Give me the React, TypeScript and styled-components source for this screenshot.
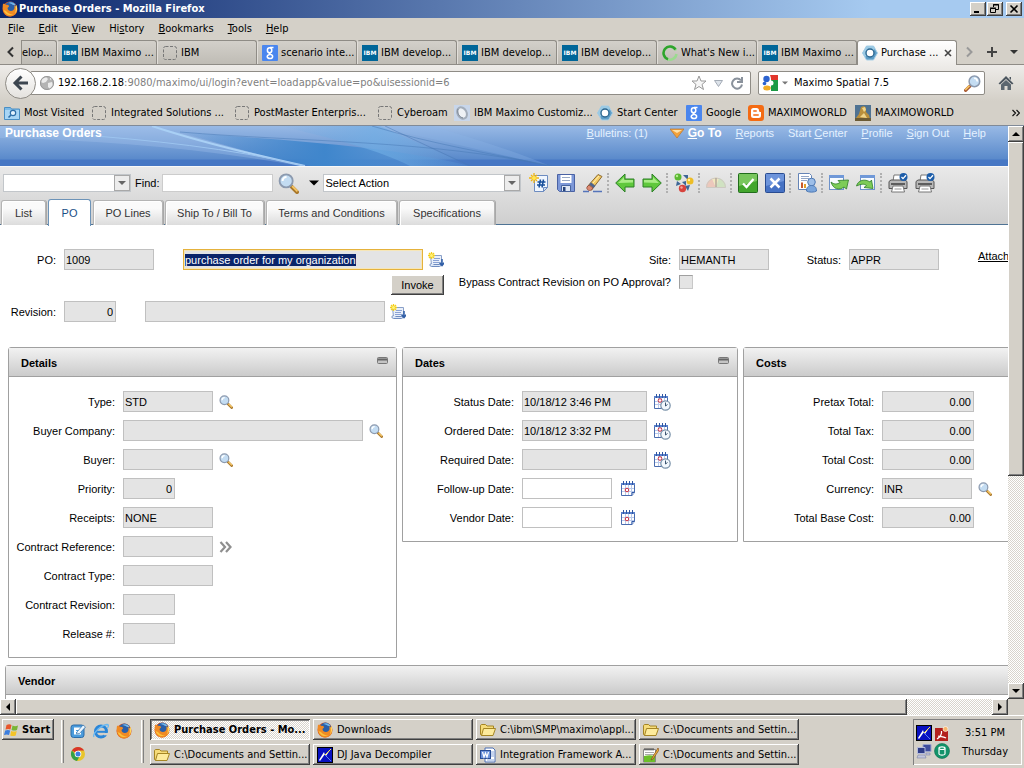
import React, { useEffect, useId, useRef } from "react";
import styled, { createGlobalStyle, css } from "styled-components";

const Global = createGlobalStyle`
  * { box-sizing: border-box; }
  html, body, #root { height: 100%; }
  body { margin: 0; overflow: hidden; background: #d4d0c8; color: #000; font: 11px/14px "DejaVu Sans Condensed", "DejaVu Sans", sans-serif; }
  button, input, select { font: inherit; color: inherit; margin: 0; padding: 0; border: 0; border-radius: 0; background: none; }
  a { color: inherit; }
  svg { display: block; flex: none; }
`;

const raised = css`
  background: #d4d0c8;
  box-shadow: inset -1px -1px #404040, inset 1px 1px #fff, inset -2px -2px #808080;
`;
const dither = css`
  background: repeating-conic-gradient(#fff 0 25%, #d8d4cc 0 50%) 0 0 / 2px 2px;
`;

const Screen = styled.div`
  display: flex;
  flex-direction: column;
  height: 100vh;
  overflow: hidden;
`;

/* ---------- window frame ---------- */
const TitleBar = styled.header`
  display: flex;
  align-items: center;
  height: 18px;
  padding: 0 2px;
  gap: 1px;
  background: linear-gradient(90deg, #0a246a, #a6caf0 85%);
  color: #fff;
  font-weight: bold;
`;
const WindowTitle = styled.span`
  flex: 1;
  white-space: nowrap;
`;
const WindowButton = styled.button<{ $apart?: boolean }>`
  ${raised}
  display: grid;
  place-items: center;
  width: 16px;
  height: 14px;
  margin-left: ${(p) => (p.$apart ? 2 : 0)}px;
`;
const MenuBar = styled.nav`
  display: flex;
  align-items: center;
  height: 22px;
  padding: 0 8px;
  gap: 14px;
`;
const MenuItem = styled.button`
  white-space: nowrap;
`;

const TabStrip = styled.div`
  display: flex;
  height: 25px;
  border-bottom: 1px solid #8f8c86;
`;
const StripButton = styled.button<{ $w: number }>`
  display: grid;
  place-items: center;
  width: ${(p) => p.$w}px;
  flex: none;
`;
const BrowserTab = styled.button<{ $active?: boolean; $w?: number }>`
  display: flex;
  align-items: center;
  gap: 3px;
  flex: 0 0 ${(p) => p.$w ?? 100}px;
  height: ${(p) => (p.$active ? 25 : 24)}px;
  padding: 0 4px;
  overflow: hidden;
  white-space: nowrap;
  border: 1px solid #8f8c86;
  border-bottom: 0;
  border-radius: 3px 3px 0 0;
  border-left-color: ${(p) => (p.$active ? "#8f8c86" : "#e2dfda")};
  background: ${(p) => (p.$active ? "linear-gradient(#fff, #eeece9)" : "linear-gradient(#d3d0ca, #bfbcb5)")};
  ${(p) => p.$w && "padding: 0; border-left: 1px solid #8f8c86; border-radius: 0 3px 0 0;"}
`;
const TabText = styled.span`
  flex: 1;
  text-align: left;
`;

const NavBar = styled.div`
  display: flex;
  align-items: center;
  height: 36px;
  padding: 0 10px 0 5px;
  background: linear-gradient(#eeece9, #d4d0c8);
`;
const BackButton = styled.button`
  display: grid;
  place-items: center;
  width: 31px;
  height: 31px;
  border: 1px solid #8f8c86;
  border-radius: 50%;
  background: linear-gradient(#fff, #e4e2de);
  z-index: 1;
`;
const UrlBox = styled.div`
  display: flex;
  align-items: center;
  flex: 1;
  height: 24px;
  margin-left: -6px;
  padding: 0 6px 0 8px;
  border: 1px solid #8f8c86;
  border-radius: 2px;
  background: #fff;
`;
const UrlHost = styled.label`
  margin-left: 3px;
`;
const UrlInput = styled.input`
  flex: 1;
  min-width: 0;
  outline: none;
  color: #808080;
`;
const UrlTools = styled.div`
  display: flex;
  align-items: center;
  gap: 7px;
`;
const SearchBox = styled(UrlBox)`
  flex: 0 0 227px;
  margin: 0 13px 0 7px;
  padding: 0 3px;
  gap: 4px;
`;
const SearchInput = styled.input`
  flex: 1;
  min-width: 0;
  outline: none;
  padding-left: 2px;
`;
const Bookmarks = styled.nav`
  display: flex;
  height: 25px;
  padding-left: 4px;
  border-bottom: 1px solid #808a98;
`;
const Bookmark = styled.a<{ $w: number }>`
  display: flex;
  align-items: center;
  flex: 0 0 ${(p) => p.$w}px;
  gap: 4px;
  text-decoration: none;
  white-space: nowrap;
`;
const MoreBookmarks = styled.button`
  margin-left: auto;
  padding-right: 4px;
`;

/* ---------- page viewport and scroll bars ---------- */
const Viewport = styled.div`
  display: grid;
  grid-template: minmax(0, 1fr) 16px / minmax(0, 1fr) 16px;
  flex: 1;
  min-height: 0;
`;
const Page = styled.main`
  overflow: hidden;
  background: #fff;
  font: 11px/14px "Liberation Sans", Arial, sans-serif;
`;
const ScrollTrack = styled.div<{ $vertical?: boolean }>`
  ${dither}
  display: flex;
  flex-direction: ${(p) => (p.$vertical ? "column" : "row")};
  min-height: 0;
`;
const ScrollArrow = styled.button`
  ${raised}
  display: grid;
  place-items: center;
  flex: 0 0 16px;
  height: 16px;
`;
const ScrollThumb = styled.div<{ $part: number }>`
  ${raised}
  flex: ${(p) => p.$part} 1 0;
`;
const ScrollRest = styled.div<{ $part: number }>`
  flex: ${(p) => p.$part} 1 0;
`;

/* ---------- application header ---------- */
const AppHeader = styled.header`
  position: relative;
  display: flex;
  justify-content: space-between;
  height: 40px;
  padding: 0 22px 0 5px;
  background: linear-gradient(#98b9e5, #5a8acb 33px, #4677c4 34px);
  color: #fff;
`;
const HeaderArt = styled.svg`
  position: absolute;
  inset: 0 auto auto 0;
`;
const AppTitle = styled.h1`
  position: relative;
  margin: 0;
  font-size: 12px;
  line-height: 14px;
`;
const HeaderLinks = styled.nav`
  position: relative;
  display: flex;
  gap: 14px;
  color: #e4f1ff;
`;
const HeaderLink = styled.a<{ $strong?: boolean }>`
  display: flex;
  align-items: center;
  height: 14px;
  gap: 4px;
  text-decoration: none;
  white-space: pre;
  font-weight: ${(p) => (p.$strong ? "bold" : "normal")};
  font-size: ${(p) => (p.$strong ? 12 : 11)}px;
  margin-left: ${(p) => (p.$strong ? 8 : 0)}px;
  color: ${(p) => (p.$strong ? "#fff" : "inherit")};
`;
const Wide = styled.div`
  width: 110%;
`;
const ToolArea = styled.div`
  height: 59px;
  border-top: 1px solid #f8f8f8;
  border-bottom: 1px solid #4f7394;
  background: linear-gradient(#e9e9e9, #cfcfcf);
`;
const ToolRow = styled.div`
  display: flex;
  align-items: center;
  height: 32px;
  padding-left: 3px;
`;
const Combo = styled.div<{ $w: number }>`
  display: flex;
  width: ${(p) => p.$w}px;
  height: 18px;
  border: 1px solid #c2c6ca;
  background: #fff;
`;
const ComboSelect = styled.select`
  flex: 1;
  min-width: 0;
  appearance: none;
  outline: none;
  padding-left: 1px;
`;
const ComboArrow = styled.span`
  display: grid;
  place-items: center;
  width: 16px;
  border: 1px solid #a8a8a8;
  background: #ececec;
`;
const FindLabel = styled.label`
  margin: 0 3px 0 4px;
`;
const FindInput = styled.input`
  width: 111px;
  height: 18px;
  border: 1px solid #ccc;
  background: #fff;
  outline: none;
`;
const FindButton = styled.button`
  margin: 0 10px 0 5px;
`;
const ActionLabel = styled.span`
  margin-right: 4px;
`;
const ToolGroups = styled.div`
  display: flex;
  margin-left: 2px;
`;
const ToolGroup = styled.div`
  display: flex;
  gap: 7px;
  padding: 0 4px 0 6px;
  border-right: 2px dotted #b0b0b0;
  &:last-child { border: 0; }
`;
const Tool = styled.button`
  width: 20px;
  height: 20px;
`;
const AppTabs = styled.div`
  display: flex;
  align-items: flex-end;
  gap: 2px;
  height: 26px;
  padding-left: 1px;
`;
const AppTab = styled.button<{ $w: number; $active?: boolean }>`
  width: ${(p) => p.$w}px;
  height: ${(p) => (p.$active ? 27 : 25)}px;
  margin-bottom: ${(p) => (p.$active ? -1 : 0)}px;
  border: 1px solid ${(p) => (p.$active ? "#6c93b8" : "#b4b4b4")};
  border-bottom: 0;
  border-radius: 3px 3px 0 0;
  background: ${(p) => (p.$active ? "#fff" : "linear-gradient(#fafafa 30%, #dcdcdc)")};
  box-shadow: ${(p) => (p.$active ? "none" : "inset 1px 1px #fff, 1px 0 #a8a8a8")};
  color: ${(p) => (p.$active ? "#1a4f86" : "#333")};
  white-space: nowrap;
`;

/* ---------- form ---------- */
const RecordForm = styled.form`
  padding-top: 24px;
`;
const TopRow = styled.div<{ $indent?: number }>`
  display: flex;
  align-items: ${(p) => (p.$indent ? "flex-start" : "center")};
  height: 21px;
  margin-bottom: 5px;
  padding-left: ${(p) => p.$indent ?? 0}px;
`;
const FieldRow = styled.div`
  display: flex;
  align-items: center;
  height: 21px;
  margin-bottom: 8px;
`;
const FieldLabel = styled.label<{ $w: number }>`
  flex: none;
  width: ${(p) => p.$w}px;
  margin-right: 8px;
  text-align: right;
  white-space: nowrap;
`;
const FieldInput = styled.input<{ $w: number; $right?: boolean; $open?: boolean; $gap?: boolean }>`
  flex: none;
  width: ${(p) => p.$w}px;
  height: 21px;
  margin-left: ${(p) => (p.$gap ? 29 : 0)}px;
  padding: 0 2px 0 1px;
  border: 1px solid #c0c0c0;
  background: ${(p) => (p.$open ? "#fff" : "#e4e4e4")};
  text-align: ${(p) => (p.$right ? "right" : "left")};
  outline: none;
  &:focus { border: 1px solid #e5b23c; box-shadow: inset 0 0 0 1px #f6e6b8; }
  &::selection { background: #0a246a; color: #fff; }
`;
const IconButton = styled.button<{ $gap: number }>`
  margin-left: ${(p) => p.$gap}px;
`;
const InvokeButton = styled.button`
  ${raised}
  width: 53px;
  height: 20px;
`;
const CheckBox = styled.input`
  appearance: none;
  width: 14px;
  height: 14px;
  border: 1px solid #a0a0a0;
  border-right-color: #c8c8c8;
  border-bottom-color: #c8c8c8;
  background: #e4e4e4;
`;
const AttachLink = styled.a`
  align-self: flex-start;
  margin-left: 39px;
  white-space: nowrap;
`;
const Sections = styled.div`
  display: flex;
  align-items: flex-start;
  gap: 5px;
  padding: 20px 0 0 8px;
`;
const Section = styled.section<{ $w?: number }>`
  flex: ${(p) => (p.$w ? `0 0 ${p.$w}px` : "1")};
  border: 1px solid #a0a0a0;
  border-radius: 3px 3px 0 0;
`;
const SectionHead = styled.div`
  display: flex;
  align-items: flex-start;
  justify-content: space-between;
  height: 29px;
  padding: 8px 8px 0 12px;
  border-bottom: 1px solid #a0a0a0;
  background: linear-gradient(#f2f2f2, #cbcbcb);
`;
const SectionTitle = styled.h2`
  margin: 0;
  font-size: 11px;
  line-height: 14px;
`;
const SectionBody = styled.div`
  padding: 14px 0 5px;
`;
const VendorWrap = styled.div`
  display: flex;
  padding: 7px 0 0 5px;
`;

/* ---------- task bar ---------- */
const TaskBar = styled.footer`
  display: flex;
  height: 53px;
  padding: 3px 2px;
  border-top: 1px solid #fff;
`;
const StartButton = styled.button`
  ${raised}
  display: flex;
  align-items: center;
  gap: 2px;
  width: 52px;
  height: 21px;
  padding-left: 2px;
  font-weight: bold;
`;
const Divider = styled.div<{ $left: number }>`
  width: 3px;
  height: 43px;
  margin: 1px 6px 0 ${(p) => p.$left}px;
  border-left: 1px solid #fff;
  border-right: 1px solid #808080;
`;
const QuickLaunch = styled.div`
  display: grid;
  grid-template-columns: repeat(3, 23px);
  grid-auto-rows: 23px;
  align-items: center;
  width: 67px;
`;
const Tasks = styled.div`
  display: grid;
  grid-template-columns: repeat(4, 160px);
  grid-auto-rows: 21px;
  gap: 4px 3px;
  flex: 1;
`;
const Task = styled.button<{ $active?: boolean }>`
  ${raised}
  display: flex;
  align-items: center;
  gap: 4px;
  padding-left: 4px;
  overflow: hidden;
  white-space: nowrap;
  ${(p) =>
    p.$active &&
    css`
      ${dither}
      font-weight: bold;
      box-shadow: inset 1px 1px #404040, inset -1px -1px #fff, inset 2px 2px #808080;
    `}
`;
const Tray = styled.div`
  display: flex;
  align-items: center;
  gap: 12px;
  width: 109px;
  padding: 0 3px;
  box-shadow: inset 1px 1px #808080, inset -1px -1px #fff;
`;
const TrayIcons = styled.div`
  display: grid;
  grid-template-columns: 16px 16px;
  gap: 2px;
`;
const Clock = styled.div`
  line-height: 19px;
  text-align: center;
  white-space: pre;
`;

/* ---------- icons ---------- */
type IconProps = { s?: number; children?: React.ReactNode };
const Svg = ({ s = 16, box = 16, children }: IconProps & { box?: number }) => (
  <svg width={s} height={s} viewBox={`0 0 ${box} ${box}`} aria-hidden="true">
    {children}
  </svg>
);
const Triangle = ({ dir = "down", w = 8, fill = "#000" }: { dir?: string; w?: number; fill?: string }) => {
  const turn: Record<string, number> = { down: 0, left: 90, up: 180, right: 270 };
  return (
    <svg width={w} height={w} viewBox="0 0 8 8" aria-hidden="true">
      <path d="M0 2h8L4 6z" fill={fill} transform={`rotate(${turn[dir]} 4 4)`} />
    </svg>
  );
};
const Firefox = () => (
  <Svg>
    <circle cx="8" cy="8" r="7.5" fill="#d9541e" />
    <circle cx="8.500" cy="6.200" r="5.600" fill="#2a5fa8" />
    <path d="M6 2c3-1.500 6-.5 7.500 2l-2.500 0c-1-1-3-2-5-2z" fill="#73b6e8" />
    <path d="M1 3c1-.5 2 0 3 1 2-.5 3 .5 3 1.500L5.500 7c0 3 4 4 6 2 1.500-1.500 1-4 .5-5 3 2 4 6 1.500 9-3 3.500-9 3-11-.5C.5 9.500.5 5.500 1 3z" fill="#f08a24" />
    <path d="M1.500 9c1 4 6 6.500 10 4-3 .5-6-.5-7.500-3z" fill="#fbc23c" />
    <path d="M14.500 4c1 3 1 6-1.500 8.500 1-3 1-5 .5-7z" fill="#ffd95c" />
  </Svg>
);
const Ibm = () => (
  <Svg>
    <rect width="16" height="16" fill="#069" />
    <text x="8" y="10" textAnchor="middle" fill="#fff" fontSize="6" fontWeight="bold" fontFamily="DejaVu Sans">IBM</text>
  </Svg>
);
const Blank = () => (
  <Svg>
    <rect x="1.500" y="1.500" width="13" height="13" rx="2" fill="none" stroke="#777" strokeDasharray="3 1.500" />
  </Svg>
);
const GoogleG = () => (
  <Svg>
    <rect width="16" height="16" rx="1" fill="#4a86ee" />
    <g fill="none" stroke="#fff" strokeWidth="1.500">
      <ellipse cx="7.600" cy="5.200" rx="2.200" ry="2.500" />
      <path d="M8 2.500h3.500M8.500 7.500c-2 .6-1.500 1.500.2 2 2.800.8 2.500 4-.7 4s-4-3.400-.5-3.800" />
    </g>
  </Svg>
);
const Spinner = () => (
  <Svg>
    <path d="M14 5.500A6.500 6.500 0 1 0 14.500 9" fill="none" stroke="#9adb8f" strokeWidth="2.500" />
    <path d="M13.500 4.500A6.500 6.500 0 1 0 6 14.200" fill="none" stroke="#2ea32c" strokeWidth="2.500" />
  </Svg>
);
const Hexagon = () => (
  <Svg>
    <path d="M4.500 1h7L15.500 8l-4 7h-7L.5 8z" fill="#5d9dc6" stroke="#a9cfe6" />
    <path d="M4.500 1h7L13 4 3 12 .5 8z" fill="#9ccae4" />
    <circle cx="8" cy="8" r="4" fill="#fff" stroke="#2c6791" strokeWidth="1.400" />
  </Svg>
);
const Globe = () => (
  <Svg>
    <circle cx="8" cy="8" r="7" fill="#b4b4b4" />
    <path d="M3 4l4-2 2 2-2 3-3 1-2-1zM9 8l4-1 1 3-3 4-2-2zM11 2l2 2-2 1z" fill="#ececec" />
    <circle cx="8" cy="8" r="6.500" fill="none" stroke="#989898" />
  </Svg>
);
const MostVisited = () => (
  <Svg>
    <path d="M0.500 2.500h6l1 1.500h8v10.500h-15z" fill="#7dbbe8" stroke="#4a8fc4" />
    <path d="M1 5h14v9H1z" fill="#a8d6f6" />
    <circle cx="9" cy="8" r="2.700" fill="#e5f4ff" stroke="#2d6ea8" strokeWidth="1.200" />
    <path d="M7 10L4.500 12.500" stroke="#2d6ea8" strokeWidth="1.600" />
  </Svg>
);
const Ring = () => (
  <Svg>
    <rect width="16" height="16" fill="#c8d6ea" />
    <ellipse cx="8" cy="8" rx="4.500" ry="6" fill="#eef1f5" stroke="#a3adba" strokeWidth="2" transform="rotate(-30 8 8)" />
    <path d="M4 4c-1 4 1 8 5 9" fill="none" stroke="#7b8796" />
  </Svg>
);
const Blogger = () => (
  <Svg>
    <rect width="16" height="16" rx="3" fill="#f46b13" />
    <path d="M5.500 3h3a2.500 2.500 0 0 1 2.500 2.500c0 1 .5 1.500 2 1.500v3.500A2.500 2.500 0 0 1 10.500 13h-5A2.500 2.500 0 0 1 3 10.500v-5A2.500 2.500 0 0 1 5.500 3z" fill="#fff" />
    <path d="M5.800 6h2.400M5.800 10h4.400" stroke="#f46b13" strokeWidth="1.500" strokeLinecap="round" />
  </Svg>
);
const Photo = () => (
  <Svg>
    <rect width="16" height="16" fill="#4f7292" />
    <path d="M1 13l3-4 2-7 3-1 2 2v4l3 3 1 4z" fill="#b98f3c" />
    <path d="M7 3l3-1 1 3-2 2zM5 12l4-4 3 5z" fill="#efd58c" />
    <path d="M0 13h16v3H0z" fill="#6b5a34" />
  </Svg>
);
const GoogleLogo = () => (
  <Svg>
    <path d="M8 0h8v5H9z" fill="#e2352b" />
    <path d="M9 5h7v11H9z" fill="#1c9a45" />
    <path d="M0 0h8l1 5v11H0z" fill="#fff" />
    <circle cx="4.500" cy="4" r="3.200" fill="#2b62cf" />
    <circle cx="2.500" cy="8.500" r="1.800" fill="#2b62cf" />
    <circle cx="9" cy="8" r="2.500" fill="#fff" />
    <ellipse cx="5" cy="13" rx="3.800" ry="2.500" fill="#f2ac24" />
  </Svg>
);
const Lens = ({ s = 14, flip = false }: { s?: number; flip?: boolean }) => (
  <Svg s={s}>
    <g transform={flip ? "matrix(-1 0 0 1 16 0)" : undefined}>
      <path d="M10.500 10.500l4 4" stroke={flip ? "#a85a34" : "#a9782c"} strokeWidth="3" strokeLinecap="round" />
      <path d="M10.800 10l4 4" stroke="#f7c765" strokeWidth="1.400" />
      <circle cx="6.200" cy="6" r="5" fill="#c3dcf2" stroke="#8c9aaf" strokeWidth="1.400" />
      <path d="M3.500 6a3 3 0 0 1 3-3" stroke="#fff" strokeWidth="1.500" fill="none" />
    </g>
  </Svg>
);
const Folder = () => (
  <Svg>
    <path d="M.5 4c0-1 .5-1.500 1.500-1.500h3.500L7 4h6.500v3H4L2 13.500l-1.500-1z" fill="#f6dc7a" stroke="#a58524" />
    <path d="M3.500 6.500h12L13 13.500H1.500z" fill="#fdeb9c" stroke="#a58524" />
  </Svg>
);
const Decompiler = () => (
  <Svg>
    <rect width="16" height="16" fill="#000" />
    <rect x="1" y="1" width="14" height="14" fill="#0810c0" />
    <path d="M2 13l5-8 1 3 5-5-4 6-1-2-5 7z" fill="#fff" />
    <path d="M8 8l6 6" stroke="#5a7cf0" />
    <path d="M8 8l6-6" stroke="#ffe94a" />
  </Svg>
);
const Word = () => (
  <Svg>
    <path d="M5 1h8l2 2v12H5z" fill="#fff" stroke="#4a6fb4" />
    <path d="M11 5h3M11 7h3M11 9h3M7 13h7" stroke="#8ca8dc" />
    <rect x=".5" y="3.500" width="10" height="8" fill="#6d93da" stroke="#284c94" />
    <path d="M2.500 5l1.500 5 1.500-4L7 10l1.500-5" stroke="#fff" fill="none" strokeWidth="1.200" />
  </Svg>
);
const Notepad = () => (
  <Svg>
    <path d="M.5 2.500h12v12.500h-12z" fill="#fff" stroke="#888" />
    <path d="M1 9c4-1 7-1 11 0v6H1z" fill="#6cbf2a" />
    <path d="M2 5.500h9M2 7.500h9" stroke="#aaa" />
    <path d="M2 1v2.500M4 1v2.500M6 1v2.500M8 1v2.500M10 1v2.500" stroke="#444" />
    <path d="M15 1L9 11l-1 2 2-1 6-9z" fill="#f3b53a" stroke="#7e4b1c" strokeWidth=".7" />
  </Svg>
);
const Desktop = () => (
  <Svg>
    <rect x="1" y="2" width="13" height="12.500" rx="2.500" fill="#4b9bdc" stroke="#2c6ca8" />
    <path d="M4 4.500h7v7H4z" fill="#fff" />
    <path d="M6 7.500h4M6 9.500h3" stroke="#4b9bdc" />
    <path d="M7 9l6-7 2.500 2-6 6.500-3 .5z" fill="#e9f5ff" stroke="#2c6ca8" strokeWidth=".7" />
  </Svg>
);
const Explorer = () => (
  <Svg>
    <circle cx="8" cy="8.500" r="5.500" fill="none" stroke="#2b86d8" strokeWidth="3" />
    <path d="M4 8.800h9.500" stroke="#2b86d8" strokeWidth="2" />
    <path d="M10 10h6v2.300h-5z" fill="#d4d0c8" />
    <path d="M1 14C-1 11 8 2 14 1.500c2 0 1.500 2 .5 3.500" fill="none" stroke="#69b8f2" strokeWidth="1.300" />
  </Svg>
);
const Chrome = () => (
  <Svg>
    <circle cx="8" cy="8" r="7" fill="#e8c52c" />
    <path d="M8 8L1.900 4.500A7 7 0 0 1 14.100 4.500H8z" fill="#d8352a" />
    <path d="M1.900 4.500A7 7 0 0 0 7 15l3-5.500-3 1z" fill="#35a047" />
    <circle cx="8" cy="8" r="3.300" fill="#fff" />
    <circle cx="8" cy="8" r="2.500" fill="#3f7fe0" />
  </Svg>
);
const WindowsFlag = () => (
  <Svg>
    <path d="M2.500 3C4.500 2 6 2 7.500 3L6.500 7.500C5 6.700 3.500 6.700 1.500 7.500z" fill="#e8562a" />
    <path d="M8.500 3.500c2 1 3.500.8 5.500 0L13 8c-2 .8-3.500.8-5.500 0z" fill="#79b534" />
    <path d="M1.200 8.500c2-.8 3.500-.8 5 0L5 13c-1.500-.8-3-.8-5 0z" fill="#3c7ede" />
    <path d="M7.200 9c2 .8 3.500.8 5.500 0l-1 4.500c-2 .8-3.500.8-5.500 0z" fill="#f4c428" />
  </Svg>
);
const Pdf = () => (
  <Svg>
    <path d="M1 3h10l3 3v10H1z" fill="#b3201c" />
    <path d="M3 14c3-2 5-5 4.500-8M4 11c3 .5 6 .5 8 2" stroke="#fff" fill="none" strokeWidth="1.200" />
    <circle cx="11.500" cy="4" r="2.500" fill="#f7b66d" stroke="#fff" strokeWidth=".6" />
  </Svg>
);
const Network = () => (
  <Svg>
    <path d="M7 1.500h8v7H7z" fill="#3f4e9e" stroke="#9aa3cc" />
    <path d="M1.500 4.500h7.500v6H1.500z" fill="#2e3c88" stroke="#b4bbdc" />
    <path d="M2 12h7l1 3H1zM10 10h4v2h-4z" fill="#c3c7dc" stroke="#7c84a8" strokeWidth=".6" />
  </Svg>
);
const Database = () => (
  <Svg>
    <circle cx="8" cy="8" r="7.500" fill="#12936a" stroke="#0b6e4e" strokeWidth=".6" />
    <path d="M5 5.500v5.500c1 1.500 5 1.500 6 0V5.500" fill="none" stroke="#fff" strokeWidth="1.200" />
    <ellipse cx="8" cy="5.200" rx="3" ry="1.300" fill="#12936a" stroke="#fff" strokeWidth="1.200" />
  </Svg>
);
const Note = () => (
  <Svg>
    <path d="M2.500 3.500h11v8l-1.500 1.500h-8.500z" fill="#eaf0fa" stroke="#8aa0c8" />
    <path d="M3.500 11.500c-2 0-2 3 0 3h8c1.500 0 1.500-2 0-2h-6" fill="#dce6f6" stroke="#6f8cc0" />
    <path d="M6 6.500h6M5 8.500h6M5 10.500h6" stroke="#8aa2d4" />
    <path d="M14 7v6M11.500 10.500l2.500 3 2.500-3" stroke="#2f5da6" fill="none" strokeWidth="1.500" />
    <path d="M3.500 0v7M0 3.500h7M1 1l5 5M6 1L1 6" stroke="#f4cf1c" strokeWidth="1.300" />
    <circle cx="3.500" cy="3.500" r="1.500" fill="#fff27a" />
  </Svg>
);
const Calendar = ({ clock = false }: { clock?: boolean }) => (
  <svg width={clock ? 18 : 16} height="18" viewBox={`0 0 ${clock ? 18 : 16} 18`} aria-hidden="true">
    <path d="M1.500 3.500h13v9l-2.500 3H1.500z" fill="#fff" stroke="#4a6cae" />
    <path d="M1 3h14v2H1z" fill="#5b82cc" />
    <path d="M2 8.500h12M2 11.500h12M5.500 5v10M8.500 5v10M11.500 5v10" stroke="#b9c9ea" />
    <path d="M3.500 1v4M6.500 1v4M9.500 1v4M12.500 1v4" stroke="#2f56a4" />
    <circle cx="7" cy={clock ? 7.5 : 10} r="1.800" fill="#fff" stroke="#c8283c" />
    {!clock && <path d="M12 15.500v-3h2.500" fill="#dbe6f7" stroke="#2f56a4" />}
    {clock && (
      <>
        <circle cx="12.500" cy="12.500" r="4.700" fill="#f3f8fd" stroke="#7890a8" strokeWidth="1.200" />
        <path d="M12.500 9.500v3.500l2-1.500" stroke="#3c5570" fill="none" />
      </>
    )}
  </svg>
);
const Chevrons = () => (
  <svg width="14" height="12" viewBox="0 0 14 12" aria-hidden="true">
    <path d="M1.500 1l4.500 5-4.500 5M7 1l4.500 5L7 11" fill="none" stroke="#8f8f8f" strokeWidth="2.200" />
  </svg>
);
const Minimize = () => (
  <svg width="11" height="9" viewBox="0 0 11 9" aria-hidden="true">
    <rect x=".5" y="1.500" width="10" height="6" rx="1" fill="#c4c4c4" stroke="#777" />
    <path d="M1 3.500h9" stroke="#666" strokeWidth="2" />
  </svg>
);

const T = ({ children }: IconProps) => <Svg s={20} box={20}>{children}</Svg>;
const NewRecord = () => (
  <T>
    <path d="M5.500 2.500h13v12l-4 4h-9z" fill="#f0f6fe" stroke="#6d8cc0" />
    <path d="M14.500 18.500v-4h4z" fill="#cfdff2" stroke="#6d8cc0" />
    <path d="M11.500 6.500L10 14.500M14.500 6.500l-1.500 8M8.500 9h8M8 12h8" stroke="#174f9b" strokeWidth="1.500" />
    <path d="M5 0v10M0 5h10M2 2l6 6M8 2L2 8" stroke="#f2b40f" strokeWidth="1.300" />
    <circle cx="5" cy="5" r="2" fill="#ffe552" />
  </T>
);
const Save = () => (
  <T>
    <path d="M1.500 1.500h17v17h-15l-2-2z" fill="#7d98d8" stroke="#4a62a4" />
    <path d="M4.500 2h11v8h-11z" fill="#fff" />
    <path d="M6 4.500h8M6 7.500h8" stroke="#98a8c4" />
    <path d="M5.500 12.500h9v6h-9z" fill="#dfe7f5" stroke="#48659f" />
    <path d="M7 14h2.500v4H7z" fill="#26437c" />
  </T>
);
const Eraser = () => (
  <T>
    <path d="M0 18.500h6M10 18.500h9" stroke="#5574ba" strokeWidth="1.500" />
    <path d="M4 14L15 1.500l4 2L8.500 17z" fill="#f3cb65" stroke="#8c6b32" />
    <path d="M7 10.500l4.500 3.500" stroke="#50658c" strokeWidth="3" />
    <path d="M4 14l2-2 4 3-1.500 2c-3 1.500-5.500-1-4.500-3z" fill="#db8a72" stroke="#8b4738" strokeWidth=".8" />
    <path d="M16 3l-6 7" stroke="#fff0b4" />
  </T>
);
const Arrow = ({ right = false }: { right?: boolean }) => (
  <T>
    <g transform={right ? "matrix(-1 0 0 1 20 0)" : undefined}>
      <path d="M.7 10L10 1v5h9v8h-9v5z" fill="#5fc83c" stroke="#2c7f27" strokeLinejoin="round" />
      <path d="M3 10l6-6v3h9v2.500z" fill="#a9ec87" />
    </g>
  </T>
);
const Route = () => (
  <T>
    <path d="M9 2h5v5zM2 13l1-5 4 3zM8 9l4-1v5zM16 12l-2 6-3-5z" fill="#3e6696" />
    <circle cx="4" cy="4" r="3.500" fill="#5bb932" />
    <circle cx="16" cy="8" r="3.500" fill="#edbd25" />
    <circle cx="8.500" cy="15.500" r="3.700" fill="#d7433d" />
    <circle cx="3" cy="3" r="1.200" fill="#b8ec94" />
    <circle cx="15" cy="7" r="1.200" fill="#fff0a0" />
    <circle cx="7.500" cy="14.500" r="1.200" fill="#f6a29c" />
  </T>
);
const Gauge = () => (
  <T>
    <path d="M0 14.500a10 10 0 0 1 6-9l4 9z" fill="#ecc8bc" />
    <path d="M6 5.500a10 10 0 0 1 7-.5l-3 9.500z" fill="#f2e8c0" />
    <path d="M13 5a10 10 0 0 1 7 9.500H10z" fill="#d0e2c2" />
    <path d="M.5 14.500a9.500 9.500 0 0 1 19 0z" fill="none" stroke="#cdc9c2" />
    <path d="M10 5v9" stroke="#a99e95" strokeWidth="1.300" />
  </T>
);
const Approve = () => (
  <T>
    <rect x=".5" y=".5" width="19" height="19" rx="1" fill="#43a62d" stroke="#216c1c" />
    <path d="M1 1h18v7L1 13z" fill="#78c65d" />
    <path d="M5 10.500l3.500 3.500L15.500 6" stroke="#fff" strokeWidth="2.300" fill="none" />
  </T>
);
const Cancel = () => (
  <T>
    <rect x=".5" y=".5" width="19" height="19" rx="1" fill="#4672c4" stroke="#294c91" />
    <path d="M1 1h18v7L1 13z" fill="#6d94db" />
    <path d="M5.500 5.500l9 9M14.500 5.500l-9 9" stroke="#fff" strokeWidth="2.500" />
  </T>
);
const Report = () => (
  <T>
    <path d="M1.500.5h11l2 2v14h-13z" fill="#fff" stroke="#6584b6" />
    <path d="M4 3.500h8M4 5.500h8M4 7.500h6" stroke="#93a7c8" />
    <path d="M4 15V9.500h2V15z" fill="#c8582d" />
    <path d="M7 15v-4h2v4z" fill="#e0a02c" />
    <circle cx="14.500" cy="9" r="3.800" fill="#9ebfe8" stroke="#4e79b4" />
    <path d="M9.500 18c0-4 2-5.500 5-5.500s5 1.500 5 5.500c-2 1.500-8 1.500-10 0z" fill="#7ba6dc" stroke="#4e79b4" />
  </T>
);
const Flow = ({ back = false }: { back?: boolean }) => (
  <T>
    <rect x={back ? 4.5 : 0.5} y="2.500" width="14" height="14" fill="#f7fbff" stroke="#6d92ca" />
    <path d={back ? "M4 2h15v3H4z" : "M0 2h15v3H0z"} fill="#6f98d8" />
    {back ? (
      <path d="M.5 13C2 7 9 5.500 14 9l1.500-2 1.500 8.500-9-1 2.500-2C8 10.500 5 11 .5 13z" fill="#7dcc58" stroke="#2d7c29" strokeWidth=".8" />
    ) : (
      <path d="M2 9c3 2.500 6 2.500 9 .5L9 7.500l10.500-.5-2 9-2.500-2C10 18 4 16 2 9z" fill="#7dcc58" stroke="#2d7c29" strokeWidth=".8" />
    )}
  </T>
);
const Printer = () => (
  <T>
    <path d="M5 8l1-6h9l-1 6z" fill="#fff" stroke="#777" />
    <path d="M1 8.500l2-1.500h14l2 1.500v7H1z" fill="#b8b8b8" stroke="#555" />
    <path d="M3 10h14v2H3z" fill="#5d5d5d" />
    <path d="M5 13h10l1.500 6h-13z" fill="#fff" stroke="#777" />
    <path d="M6.500 16h7" stroke="#999" />
    <circle cx="15.500" cy="4" r="4" fill="#1c5da9" />
    <path d="M13.500 4l1.500 1.600 3-3.400" stroke="#fff" strokeWidth="1.300" fill="none" />
  </T>
);

/* ---------- building blocks ---------- */
const Key = ({ text, at = 0 }: { text: string; at?: number }) => (
  <span>
    {text.slice(0, at)}
    <u>{text[at]}</u>
    {text.slice(at + 1)}
  </span>
);

type FieldProps = {
  label: string;
  labelWidth: number;
  width?: number;
  value?: string;
  right?: boolean;
  open?: boolean;
  icon?: React.ReactNode;
  iconGap?: number;
};
const Field = ({ label, labelWidth, width = 90, value = "", right, open, icon, iconGap = 6 }: FieldProps) => {
  const id = useId();
  return (
    <>
      <FieldLabel htmlFor={id} $w={labelWidth}>{label}</FieldLabel>
      <FieldInput id={id} $w={width} $right={right} $open={open} readOnly={!open} defaultValue={value} />
      {icon && <IconButton type="button" $gap={iconGap} aria-label={`${label} lookup`}>{icon}</IconButton>}
    </>
  );
};

const details: Omit<FieldProps, "labelWidth">[] = [
  { label: "Type:", value: "STD", icon: <Lens /> },
  { label: "Buyer Company:", width: 240, icon: <Lens /> },
  { label: "Buyer:", icon: <Lens /> },
  { label: "Priority:", width: 52, value: "0", right: true },
  { label: "Receipts:", value: "NONE" },
  { label: "Contract Reference:", icon: <Chevrons /> },
  { label: "Contract Type:" },
  { label: "Contract Revision:", width: 52 },
  { label: "Release #:", width: 52 },
];
const dates: Omit<FieldProps, "labelWidth">[] = [
  { label: "Status Date:", width: 125, value: "10/18/12 3:46 PM", icon: <Calendar clock /> },
  { label: "Ordered Date:", width: 125, value: "10/18/12 3:32 PM", icon: <Calendar clock /> },
  { label: "Required Date:", width: 125, icon: <Calendar clock /> },
  { label: "Follow-up Date:", open: true, icon: <Calendar />, iconGap: 8 },
  { label: "Vendor Date:", open: true, icon: <Calendar />, iconGap: 8 },
];
const costs: Omit<FieldProps, "labelWidth">[] = [
  { label: "Pretax Total:", width: 92, value: "0.00", right: true },
  { label: "Total Tax:", width: 92, value: "0.00", right: true },
  { label: "Total Cost:", width: 92, value: "0.00", right: true },
  { label: "Currency:", value: "INR", icon: <Lens /> },
  { label: "Total Base Cost:", width: 92, value: "0.00", right: true },
];

const Panel = ({ title, width, labelWidth, fields }: { title: string; width?: number; labelWidth: number; fields: Omit<FieldProps, "labelWidth">[] }) => (
  <Section $w={width}>
    <SectionHead>
      <SectionTitle>{title}</SectionTitle>
      {width && <button type="button" aria-label={`Minimize ${title}`}><Minimize /></button>}
    </SectionHead>
    <SectionBody>
      {fields.map((f) => (
        <FieldRow key={f.label}><Field labelWidth={labelWidth} {...f} /></FieldRow>
      ))}
    </SectionBody>
  </Section>
);

const browserTabs: [React.ReactNode, string][] = [
  [<Ibm />, "IBM Maximo ..."],
  [<Blank />, "IBM"],
  [<GoogleG />, "scenario inte..."],
  [<Ibm />, "IBM develop..."],
  [<Ibm />, "IBM develop..."],
  [<Ibm />, "IBM develop..."],
  [<Spinner />, "What's New i..."],
  [<Ibm />, "IBM Maximo ..."],
];
const bookmarks: [React.ReactNode, string, number][] = [
  [<MostVisited />, "Most Visited", 87],
  [<Blank />, "Integrated Solutions ...", 143],
  [<Blank />, "PostMaster Enterpris...", 143],
  [<Blank />, "Cyberoam", 77],
  [<Ring />, "IBM Maximo Customiz...", 143],
  [<Hexagon />, "Start Center", 89],
  [<GoogleG />, "Google", 62],
  [<Blogger />, "MAXIMOWORLD", 107],
  [<Photo />, "MAXIMOWORLD", 107],
];
const menus: [string, number][] = [["File", 0], ["Edit", 0], ["View", 0], ["History", 2], ["Bookmarks", 0], ["Tools", 0], ["Help", 0]];
const appTabs: [string, number][] = [["List", 45], ["PO", 43], ["PO Lines", 70], ["Ship To / Bill To", 99], ["Terms and Conditions", 131], ["Specifications", 96]];
const tools: [string, React.ReactNode][][] = [
  [["New", <NewRecord />], ["Save", <Save />], ["Clear", <Eraser />]],
  [["Previous", <Arrow />], ["Next", <Arrow right />]],
  [["Route", <Route />]],
  [["Status", <Gauge />]],
  [["Approve", <Approve />], ["Cancel", <Cancel />]],
  [["Reports", <Report />]],
  [["Receive", <Flow />], ["Return", <Flow back />]],
  [["Print", <Printer />], ["Print all", <Printer />]],
];
const tasks: [React.ReactNode, string][] = [
  [<Firefox />, "Purchase Orders - Mo..."],
  [<Firefox />, "Downloads"],
  [<Folder />, "C:\\ibm\\SMP\\maximo\\appl..."],
  [<Folder />, "C:\\Documents and Settin..."],
  [<Folder />, "C:\\Documents and Settin..."],
  [<Decompiler />, "DJ Java Decompiler"],
  [<Word />, "Integration Framework A..."],
  [<Notepad />, "C:\\Documents and Settin..."],
];

export default function App() {
  const description = useRef<HTMLInputElement>(null);
  useEffect(() => {
    description.current?.focus();
    description.current?.select();
  }, []);

  return (
    <Screen>
      <Global />
      <TitleBar>
        <Firefox />
        <WindowTitle>Purchase Orders - Mozilla Firefox</WindowTitle>
        <WindowButton aria-label="Minimize"><Svg s={10} box={10}><path d="M1 7h5v2H1z" /></Svg></WindowButton>
        <WindowButton aria-label="Restore">
          <Svg s={10} box={10}><path d="M3.500 3V.5h5v5H6M3 1h6M.5 4.500h5v4h-5zM0 4h6" fill="none" stroke="#000" /></Svg>
        </WindowButton>
        <WindowButton $apart aria-label="Close">
          <Svg s={10} box={10}><path d="M1.500 1.500l7 7M8.500 1.500l-7 7" stroke="#000" strokeWidth="1.600" /></Svg>
        </WindowButton>
      </TitleBar>
      <MenuBar>
        {menus.map(([m, at]) => <MenuItem key={m}><Key text={m} at={at} /></MenuItem>)}
      </MenuBar>

      <TabStrip>
        <StripButton $w={21} aria-label="Scroll tabs left">
          <Svg s={12} box={12}><path d="M8 1.500L3.500 6 8 10.500" fill="none" stroke="#333" strokeWidth="2" /></Svg>
        </StripButton>
        <BrowserTab $w={36}><TabText>elop...</TabText></BrowserTab>
        {browserTabs.map(([icon, text], i) => (
          <BrowserTab key={i}>{icon}<TabText>{text}</TabText></BrowserTab>
        ))}
        <BrowserTab $active>
          <Hexagon /><TabText>Purchase ...</TabText>
          <Svg s={8} box={8}><path d="M1 1l6 6M7 1L1 7" stroke="#444" strokeWidth="1.600" /></Svg>
        </BrowserTab>
        <StripButton $w={24} aria-label="Scroll tabs right">
          <Svg s={12} box={12}><path d="M4 1.500L8.500 6 4 10.500" fill="none" stroke="#999" strokeWidth="2" /></Svg>
        </StripButton>
        <StripButton $w={22} aria-label="New tab">
          <Svg s={10} box={10}><path d="M5 0v10M0 5h10" stroke="#444" strokeWidth="2" /></Svg>
        </StripButton>
        <StripButton $w={21} aria-label="List all tabs"><Triangle fill="#333" /></StripButton>
      </TabStrip>

      <NavBar>
        <BackButton aria-label="Back">
          <Svg s={18} box={18}><path d="M9.500 2.500L3 9l6.500 6.500M3.500 9H16" fill="none" stroke="#3d4650" strokeWidth="3" /></Svg>
        </BackButton>
        <UrlBox>
          <Globe />
          <UrlHost htmlFor="address">192.168.2.18</UrlHost>
          <UrlInput id="address" defaultValue=":9080/maximo/ui/login?event=loadapp&value=po&uisessionid=6" />
          <UrlTools>
            <Svg><path d="M8 1l2 5h5l-4 3.500 1.500 5L8 11.500l-4.500 3 1.500-5L1 6h5z" fill="#f6f6f6" stroke="#999" /></Svg>
            <Svg s={9} box={9}><path d="M.5 1.500h8l-4 6z" fill="#dde3ea" stroke="#a4acb6" /></Svg>
            <Svg s={14} box={14}><path d="M11 4.500A5 5 0 1 0 12 8.500M12 1v5H7" fill="none" stroke="#8a929c" strokeWidth="2" /></Svg>
          </UrlTools>
        </UrlBox>
        <SearchBox>
          <GoogleLogo />
          <Triangle w={6} fill="#777" />
          <SearchInput aria-label="Search" defaultValue="Maximo Spatial 7.5" />
          <Lens s={17} flip />
        </SearchBox>
        <button aria-label="Home">
          <Svg><path d="M8 1l7.500 7.500L14 9.500 8 4 2 9.500.5 8.500zM11.500 2H13v3l-1.500-1.500z" fill="#4c565f" /><path d="M3 9.500l5-4.500 5 4.500V15H9.500v-4h-3v4H3z" fill="#5c6770" /></Svg>
        </button>
      </NavBar>

      <Bookmarks>
        {bookmarks.map(([icon, text, w], i) => (
          <Bookmark key={i} href="#" $w={w}>{icon}<span>{text}</span></Bookmark>
        ))}
        <MoreBookmarks aria-label="More bookmarks">
          <Svg s={8} box={8}><path d="M.5 1l3 3-3 3M4.500 1l3 3-3 3" fill="none" stroke="#111" strokeWidth="1.200" /></Svg>
        </MoreBookmarks>
      </Bookmarks>

      <Viewport>
        <Page>
          <AppHeader>
            <HeaderArt width="560" height="40" viewBox="0 0 560 40" aria-hidden="true">
              <defs>
                <linearGradient id="deep" x1="0" x2="1">
                  <stop offset="0" stopColor="#3f86cc" stopOpacity="0" />
                  <stop offset=".5" stopColor="#3f86cc" />
                  <stop offset="1" stopColor="#5f9ddb" stopOpacity=".2" />
                </linearGradient>
                <linearGradient id="light" x1="0" x2="1">
                  <stop offset="0" stopColor="#6aa8e0" stopOpacity="0" />
                  <stop offset=".5" stopColor="#6fade4" stopOpacity=".7" />
                  <stop offset="1" stopColor="#6aa8e0" stopOpacity="0" />
                </linearGradient>
              </defs>
              <path d="M0 0h150c60 14 100 26 150 40C200 22 100 14 0 12z" fill="#a8c8ee" opacity=".3" />
              <path d="M180 6c90 8 200 12 290 34H310C260 30 220 18 180 6z" fill="url(#deep)" />
              <path d="M280 0h100l90 40h-60C380 24 330 12 280 0z" fill="url(#light)" />
              <path d="M372 0h60c40 12 80 24 118 40C490 26 430 12 372 0z" fill="#8db7e8" opacity=".3" />
              <path d="M152 0C200 16 250 28 305 40" stroke="#a9d0f5" strokeWidth="2" fill="none" />
              <path d="M70 8c80 6 160 14 235 32" stroke="#9cc4ef" fill="none" />
              <path d="M180 6c120 10 250 8 370 34M385 0l85 40M372 0c60 18 120 28 180 40" stroke="#4779b5" opacity=".5" fill="none" />
            </HeaderArt>
            <AppTitle>Purchase Orders</AppTitle>
            <HeaderLinks>
              <HeaderLink href="#"><Key text="Bulletins: (1)" /></HeaderLink>
              <HeaderLink href="#" $strong>
                <Svg s={14} box={14}><path d="M0 3h14L7 12z" fill="#f2a23c" stroke="#b87732" strokeWidth=".7" /><path d="M2 4h10L7 7z" fill="#ffe2a8" /></Svg>
                <Key text="Go To" />
              </HeaderLink>
              <HeaderLink href="#"><Key text="Reports" /></HeaderLink>
              <HeaderLink href="#"><Key text="Start Center" at={6} /></HeaderLink>
              <HeaderLink href="#"><Key text="Profile" /></HeaderLink>
              <HeaderLink href="#"><Key text="Sign Out" /></HeaderLink>
              <HeaderLink href="#"><Key text="Help" /></HeaderLink>
            </HeaderLinks>
          </AppHeader>
          <Wide>
            <ToolArea>
              <ToolRow>
                <Combo $w={128}>
                  <ComboSelect aria-label="Query"><option></option></ComboSelect>
                  <ComboArrow><Triangle fill="#666" /></ComboArrow>
                </Combo>
                <FindLabel htmlFor="find">Find:</FindLabel>
                <FindInput id="find" />
                <FindButton aria-label="Find"><Lens s={21} /></FindButton>
                <ActionLabel><Triangle w={10} /></ActionLabel>
                <Combo $w={198}>
                  <ComboSelect aria-label="Action"><option>Select Action</option></ComboSelect>
                  <ComboArrow><Triangle fill="#666" /></ComboArrow>
                </Combo>
                <ToolGroups>
                  {tools.map((group, i) => (
                    <ToolGroup key={i}>
                      {group.map(([name, icon]) => <Tool key={name} aria-label={name}>{icon}</Tool>)}
                    </ToolGroup>
                  ))}
                </ToolGroups>
              </ToolRow>
              <AppTabs>
                {appTabs.map(([name, w]) => <AppTab key={name} $w={w} $active={name === "PO"}>{name}</AppTab>)}
              </AppTabs>
            </ToolArea>

            <RecordForm>
              <TopRow>
                <Field label="PO:" labelWidth={56} value="1009" />
                <FieldInput ref={description} $w={240} $gap aria-label="Description" readOnly defaultValue="purchase order for my organization" />
                <IconButton type="button" $gap={5} aria-label="Long description"><Note /></IconButton>
                <Field label="Site:" labelWidth={227} value="HEMANTH" />
                <Field label="Status:" labelWidth={72} value="APPR" />
                <AttachLink href="#">Attach</AttachLink>
              </TopRow>
              <TopRow $indent={391}>
                <InvokeButton type="button">Invoke</InvokeButton>
                <FieldLabel htmlFor="bypass" $w={227}>Bypass Contract Revision on PO Approval?</FieldLabel>
                <CheckBox id="bypass" type="checkbox" />
              </TopRow>
              <TopRow>
                <Field label="Revision:" labelWidth={56} width={52} value="0" right />
                <FieldInput $w={240} $gap aria-label="Revision description" readOnly />
                <IconButton type="button" $gap={5} aria-label="Revision long description"><Note /></IconButton>
              </TopRow>

              <Sections>
                <Panel title="Details" width={389} labelWidth={106} fields={details} />
                <Panel title="Dates" width={336} labelWidth={111} fields={dates} />
                <Panel title="Costs" labelWidth={130} fields={costs} />
              </Sections>
              <VendorWrap>
                <Section>
                  <SectionHead><SectionTitle>Vendor</SectionTitle></SectionHead>
                  <SectionBody />
                </Section>
              </VendorWrap>
            </RecordForm>
          </Wide>
        </Page>
        <ScrollTrack $vertical>
          <ScrollArrow aria-label="Scroll up"><Triangle dir="up" /></ScrollArrow>
          <ScrollThumb $part={334} />
          <ScrollRest $part={207} />
          <ScrollArrow aria-label="Scroll down"><Triangle dir="down" /></ScrollArrow>
        </ScrollTrack>
        <ScrollTrack>
          <ScrollArrow aria-label="Scroll left"><Triangle dir="left" /></ScrollArrow>
          <ScrollThumb $part={891} />
          <ScrollRest $part={85} />
          <ScrollArrow aria-label="Scroll right"><Triangle dir="right" /></ScrollArrow>
        </ScrollTrack>
      </Viewport>

      <TaskBar>
        <StartButton><WindowsFlag />Start</StartButton>
        <Divider $left={7} />
        <QuickLaunch>
          <button aria-label="Show desktop"><Desktop /></button>
          <button aria-label="Internet Explorer"><Explorer /></button>
          <button aria-label="Firefox"><Firefox /></button>
          <button aria-label="Chrome"><Chrome /></button>
        </QuickLaunch>
        <Divider $left={4} />
        <Tasks>
          {tasks.map(([icon, text], i) => <Task key={i} $active={i === 0}>{icon}<span>{text}</span></Task>)}
        </Tasks>
        <Tray>
          <TrayIcons><Decompiler /><Pdf /><Network /><Database /></TrayIcons>
          <Clock>{"3:51 PM\nThursday"}</Clock>
        </Tray>
      </TaskBar>
    </Screen>
  );
}
